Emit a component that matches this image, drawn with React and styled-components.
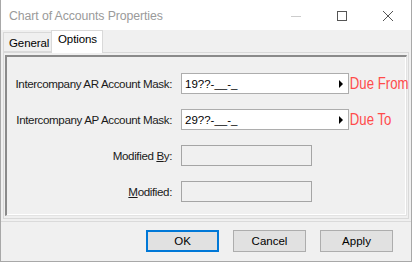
import React from 'react'
import styled, { createGlobalStyle } from 'styled-components'

const GlobalStyle = createGlobalStyle`
  html, body {
    margin: 0;
    padding: 0;
    background: #ffffff;
  }
  * {
    box-sizing: border-box;
  }
`

const rows = [
  { label: 'Intercompany AR Account Mask:', value: '19??-__-_', note: 'Due From' },
  { label: 'Intercompany AP Account Mask:', value: '29??-__-_', note: 'Due To' }
]

const App = () => {
  return (
    <>
      <GlobalStyle />
      <Window>
        <TitleBar>
          <Title>Chart of Accounts Properties</Title>
          <Controls>
            <CtrlButton>
              <svg width='10' height='10' viewBox='0 0 10 10'>
                <line x1='0' y1='5.5' x2='10' y2='5.5' stroke='#cccccc' strokeWidth='1' />
              </svg>
            </CtrlButton>
            <CtrlButton>
              <svg width='10' height='10' viewBox='0 0 10 10'>
                <rect x='0.5' y='0.5' width='9' height='9' fill='none' stroke='#555' strokeWidth='1' />
              </svg>
            </CtrlButton>
            <CtrlButton>
              <svg width='10' height='10' viewBox='0 0 10 10'>
                <path d='M0 0L10 10M10 0L0 10' stroke='#555' strokeWidth='1' />
              </svg>
            </CtrlButton>
          </Controls>
        </TitleBar>
        <Body>
          <TabStrip>
            <Tab>General</Tab>
            <Tab active>Options</Tab>
          </TabStrip>
          <TabPage>
            <Frame>
              {rows.map(row => (
                <Row key={row.label} gap={11}>
                  <Label>{row.label}</Label>
                  <MaskInput>
                    <span>{row.value}</span>
                    <Arrow />
                  </MaskInput>
                  <Note>{row.note}</Note>
                </Row>
              ))}
              <Row gap={20}>
                <Label>Modified <u>B</u>y:</Label>
                <ReadOnlyBox />
              </Row>
              <Row gap={15}>
                <Label><u>M</u>odified:</Label>
                <ReadOnlyBox />
              </Row>
            </Frame>
          </TabPage>
        </Body>
        <ButtonBar>
          <Button primary>OK</Button>
          <Button>Cancel</Button>
          <Button>Apply</Button>
        </ButtonBar>
      </Window>
    </>
  )
}

export default App

const Window = styled.div`
  width: 412px;
  height: 262px;
  display: flex;
  flex-direction: column;
  background: #f0f0f0;
  border-left: 1px solid #a8a8a8;
  border-right: 1px solid #a8a8a8;
  border-bottom: 1px solid #a8a8a8;
  font-family: "Liberation Sans", Arial, sans-serif;
  overflow: hidden;
`
const TitleBar = styled.div`
  height: 30px;
  flex: none;
  display: flex;
  align-items: center;
  justify-content: space-between;
  background: #ffffff;
  padding-left: 8px;
`
const Title = styled.div`
  font-size: 12.3px;
  letter-spacing: -0.1px;
  color: #9a9a9a;
  padding-top: 1px;
`
const Controls = styled.div`
  display: flex;
  align-items: center;
  height: 100%;
`
const CtrlButton = styled.div`
  width: 46px;
  height: 100%;
  display: flex;
  align-items: center;
  justify-content: center;
  padding-top: 1px;
`
const Body = styled.div`
  padding: 0 2px 0 2px;
  display: flex;
  flex-direction: column;
`
const TabStrip = styled.div`
  height: 22px;
  display: flex;
  align-items: flex-end;
  position: relative;
  z-index: 1;
`
const Tab = styled.div`
  height: ${p => (p.active ? '23px' : '20px')};
  margin-bottom: ${p => (p.active ? '-1px' : '0')};
  padding: ${p => (p.active ? '2px 6px 0 6px' : '4px 4px 0 5px')};
  background: ${p => (p.active ? '#ffffff' : '#f0f0f0')};
  border: 1px solid #d9d9d9;
  border-bottom: ${p => (p.active ? 'none' : '1px solid #d9d9d9')};
  border-right: ${p => (p.active ? '1px solid #d9d9d9' : 'none')};
  font-size: 11.5px;
  letter-spacing: -0.1px;
  color: #000;
  width: ${p => (p.active ? '52px' : '48px')};
`
const TabPage = styled.div`
  height: 167px;
  width: 406px;
  border: 1px solid #d9d9d9;
  padding: 2px 1px 1px 1px;
  background: #f0f0f0;
`
const Frame = styled.div`
  height: 161px;
  border-top: 2px solid #8a8a8a;
  border-left: 2px solid #8a8a8a;
  border-right: 1px solid #e3e3e3;
  border-bottom: 1px solid #e3e3e3;
  box-shadow: inset -1px -1px 0 #ffffff;
  padding-top: 16px;
  display: flex;
  flex-direction: column;
`
const Row = styled.div`
  display: flex;
  align-items: center;
  height: 21px;
  & + & {
    margin-top: ${p => p.gap}px;
  }
`
const Label = styled.div`
  width: 165px;
  flex: none;
  text-align: right;
  font-size: 11.6px;
  letter-spacing: -0.38px;
  color: #1a1a1a;
  margin-right: 9px;
  white-space: nowrap;
`
const MaskInput = styled.div`
  flex: none;
  width: 168px;
  height: 21px;
  background: #ffffff;
  border: 1px solid #adadad;
  display: flex;
  align-items: center;
  justify-content: space-between;
  padding: 0 5px 0 3px;
  font-size: 11.5px;
  color: #000;
`
const Arrow = styled.span`
  width: 0;
  height: 0;
  border-top: 4px solid transparent;
  border-bottom: 4px solid transparent;
  border-left: 4px solid #000;
`
const Note = styled.div`
  flex: none;
  font-size: 16.5px;
  color: #ff4b4b;
  white-space: nowrap;
  padding-left: 1px;
  transform: scaleX(0.8);
  transform-origin: left center;
`
const ReadOnlyBox = styled.div`
  flex: none;
  width: 131px;
  height: 21px;
  background: #f0f0f0;
  border: 1px solid #a5a5a5;
`
const ButtonBar = styled.div`
  flex: 1;
  margin-top: 2px;
  border-top: 1px solid #dadada;
  display: flex;
  justify-content: flex-end;
  gap: 14px;
  padding: 8px 18px 0 0;
`
const Button = styled.div`
  width: 73px;
  height: 22px;
  background: #e1e1e1;
  border: ${p => (p.primary ? '2px solid #0078d7' : '1px solid #adadad')};
  display: flex;
  align-items: center;
  justify-content: center;
  font-size: 11.5px;
  color: #000;
`
